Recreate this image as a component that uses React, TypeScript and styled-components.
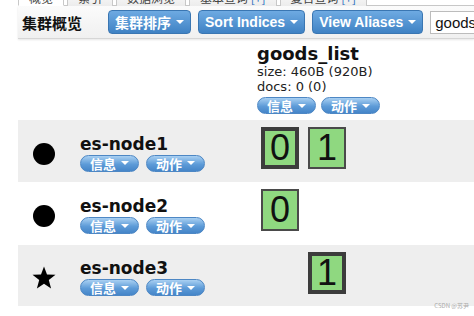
import styled, { createGlobalStyle } from 'styled-components';

const GlobalStyle = createGlobalStyle`
  html, body {
    margin: 0;
    padding: 0;
    background: #fff;
  }
  body {
    font-family: "DejaVu Sans", Verdana, "Noto Sans CJK SC", sans-serif;
    overflow: hidden;
  }
`;

const Page = styled.div`
  position: relative;
  width: 474px;
  height: 316px;
  padding-left: 18px;
  box-sizing: border-box;
  overflow: hidden;
`;

const Tabs = styled.div`
  display: flex;
  gap: 3px;
  height: 17px;
  margin-top: -11px;
  border-bottom: 1px solid #c8c8c8;
  box-sizing: border-box;
`;

const Tab = styled.div<{ $active?: boolean }>`
  height: 17px;
  box-sizing: border-box;
  padding: 0 10px;
  line-height: 16px;
  font-size: 12px;
  font-family: "Noto Sans CJK SC", sans-serif;
  color: #444;
  border: 1px solid #c8c8c8;
  border-bottom: ${p => (p.$active ? '1px solid #fff' : 'none')};
  background: ${p => (p.$active ? '#fff' : 'linear-gradient(#fdfdfd, #ececec)')};
  white-space: nowrap;

  b {
    font-weight: normal;
    color: #2a6fc0;
  }
`;

const Header = styled.div`
  display: flex;
  align-items: center;
  gap: 7px;
  height: 32px;
  padding-left: 4px;
  background: linear-gradient(#fbfbfb, #f0f0f0);
  border-bottom: 1px solid #d6d6d6;
  box-shadow: 0 1px 2px rgba(0, 0, 0, 0.1);
`;

const Title = styled.h1`
  margin: 0 19px 0 0;
  font-family: "Noto Sans CJK SC", sans-serif;
  font-size: 15px;
  font-weight: bold;
  color: #111;
  white-space: nowrap;
`;

const Caret = styled.span<{ $size?: number }>`
  display: inline-block;
  width: 0;
  height: 0;
  border-left: ${p => p.$size ?? 4}px solid transparent;
  border-right: ${p => p.$size ?? 4}px solid transparent;
  border-top: ${p => p.$size ?? 4}px solid #fff;
`;

const HeaderButton = styled.button`
  display: flex;
  align-items: center;
  gap: 5px;
  height: 24px;
  padding: 0 6px;
  border: 1px solid #3a76b2;
  border-radius: 4px;
  background: linear-gradient(#6eaae2, #3f82c4);
  color: #fff;
  font-family: "Liberation Sans", "Noto Sans CJK SC", sans-serif;
  font-size: 14px;
  font-weight: bold;
  white-space: nowrap;
  flex-shrink: 0;
`;

const Search = styled.input`
  width: 80px;
  height: 23px;
  box-sizing: border-box;
  padding: 0 4px;
  border: 1px solid #bcbcbc;
  background: #fff;
  font-family: "Liberation Sans", sans-serif;
  font-size: 15px;
  color: #111;
  flex-shrink: 0;
`;

const Row = styled.div<{ $shaded?: boolean; $height: number }>`
  display: grid;
  grid-template-columns: 239px 155px;
  height: ${p => p.$height}px;
  background: ${p => (p.$shaded ? '#eeeeee' : 'transparent')};
`;

const NodeCell = styled.div`
  display: flex;
  align-items: center;
  padding-left: 14px;
  gap: 24px;
`;

const Bullet = styled.div`
  width: 24px;
  height: 24px;
  margin-top: 5px;
  display: flex;
  align-items: center;
  justify-content: center;
`;

const Dot = styled.div`
  width: 22px;
  height: 22px;
  border-radius: 50%;
  background: #000;
`;

const NodeInfo = styled.div`
  display: flex;
  flex-direction: column;
  padding-top: 3px;
`;

const Name = styled.div<{ $size: number }>`
  font-size: ${p => p.$size}px;
  font-weight: bold;
  line-height: 20px;
  color: #111;
`;

const PillGroup = styled.div<{ $gap: number; $top: number }>`
  display: flex;
  gap: ${p => p.$gap}px;
  margin-top: ${p => p.$top}px;
`;

const Pill = styled.button`
  display: flex;
  align-items: center;
  gap: 5px;
  height: 17px;
  padding: 0 9px;
  border: 1px solid #4d87c4;
  border-radius: 9px;
  background: linear-gradient(#a9d0f2, #5d9bd8 55%, #4585c8);
  color: #fff;
  font-family: "Noto Sans CJK SC", sans-serif;
  font-size: 13px;
  font-weight: bold;
  line-height: 1;
`;

const IndexCell = styled.div`
  padding-top: 5px;
`;

const Meta = styled.div`
  font-size: 13px;
  line-height: 15px;
  color: #222;
`;

const ShardCell = styled.div`
  display: grid;
  grid-template-columns: 38px 38px;
  gap: 9px;
  align-items: start;
  padding: 7px 0 0 4px;
`;

const Shard = styled.div<{ $primary?: boolean; $slot: number }>`
  grid-column: ${p => p.$slot};
  width: 38px;
  height: 42px;
  box-sizing: border-box;
  display: flex;
  align-items: center;
  justify-content: center;
  border: ${p => (p.$primary ? '4px solid #3c3c3c' : '2px solid #4a4a4a')};
  background: #8fd880;
  font-family: "Liberation Sans", sans-serif;
  font-size: 36px;
  color: #111;
`;

const Watermark = styled.div`
  position: absolute;
  right: 5px;
  bottom: 6px;
  font-family: "Noto Sans CJK SC", sans-serif;
  font-size: 6px;
  color: #aaa;
`;

const Star = () => (
  <svg width="24" height="24" viewBox="0 0 24 24">
    <polygon
      points="12,0.5 15,8.4 23.5,8.8 16.8,14 19.1,22.5 12,17.7 4.9,22.5 7.2,14 0.5,8.8 9,8.4"
      fill="#000"
    />
  </svg>
);

const Actions = ({ gap, top }: { gap: number; top: number }) => (
  <PillGroup $gap={gap} $top={top}>
    <Pill>信息 <Caret /></Pill>
    <Pill>动作 <Caret /></Pill>
  </PillGroup>
);

const nodes = [
  { name: 'es-node1', master: false, shards: [{ n: 0, primary: true }, { n: 1, primary: false }] },
  { name: 'es-node2', master: false, shards: [{ n: 0, primary: false }] },
  { name: 'es-node3', master: true, shards: [{ n: 1, primary: true }] },
];

const heights = [62, 63, 61];

export default function App() {
  return (
    <>
      <GlobalStyle />
      <Page>
        <Tabs>
          <Tab $active>概览</Tab>
          <Tab>索引</Tab>
          <Tab>数据浏览</Tab>
          <Tab>基本查询 <b>[+]</b></Tab>
          <Tab>复合查询 <b>[+]</b></Tab>
        </Tabs>
        <Header>
          <Title>集群概览</Title>
          <HeaderButton>集群排序 <Caret /></HeaderButton>
          <HeaderButton>Sort Indices <Caret /></HeaderButton>
          <HeaderButton>View Aliases <Caret /></HeaderButton>
          <Search defaultValue="goods" />
        </Header>

        <Row $height={81}>
          <div />
          <IndexCell>
            <Name $size={18}>goods_list</Name>
            <Meta>size: 460B (920B)</Meta>
            <Meta>docs: 0 (0)</Meta>
            <Actions gap={5} top={3} />
          </IndexCell>
        </Row>

        {nodes.map((node, i) => (
          <Row key={node.name} $height={heights[i]} $shaded={i !== 1}>
            <NodeCell>
              <Bullet>{node.master ? <Star /> : <Dot />}</Bullet>
              <NodeInfo>
                <Name $size={17}>{node.name}</Name>
                <Actions gap={7} top={1} />
              </NodeInfo>
            </NodeCell>
            <ShardCell>
              {node.shards.map(s => (
                <Shard key={s.n} $slot={s.n + 1} $primary={s.primary}>
                  {s.n}
                </Shard>
              ))}
            </ShardCell>
          </Row>
        ))}

        <Watermark>CSDN @苏尹</Watermark>
      </Page>
    </>
  );
}
